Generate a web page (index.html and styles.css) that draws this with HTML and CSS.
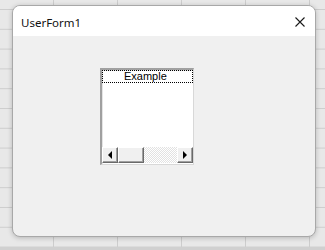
FILE: index.html
```html
<!DOCTYPE html>
<html>
<head>
<meta charset="utf-8">
<link rel="stylesheet" href="styles.css">
</head>
<body>
<div class="sheet">
  <div class="window">
    <div class="titlebar">
      <span class="title">UserForm1</span>
      <svg class="close" width="10" height="10" viewBox="0 0 10 10"><path d="M0.5 0.5 L9.5 9.5 M9.5 0.5 L0.5 9.5" stroke="#1a1a1a" stroke-width="1.1" fill="none"/></svg>
    </div>
    <div class="client">
      <div class="listbox">
        <div class="item">Example</div>
        <div class="list-space"></div>
        <div class="hscroll">
          <div class="sbtn"><span class="arrow-left"></span></div>
          <div class="thumb"></div>
          <div class="track"></div>
          <div class="sbtn"><span class="arrow-right"></span></div>
        </div>
      </div>
    </div>
  </div>
  <div class="bottom-strip"></div>
</div>
</body>
</html>
```
FILE: styles.css
```css
html, body {
  margin: 0;
  padding: 0;
}
body {
  width: 325px;
  height: 250px;
  overflow: hidden;
}
.sheet {
  width: 325px;
  height: 250px;
  display: flex;
  flex-direction: column;
  background-color: #e8e8e8;
  background-image:
    linear-gradient(to right, #cdcdcd 1px, transparent 1px),
    linear-gradient(to bottom, #cdcdcd 1px, transparent 1px);
  background-size: 64px 100%, 100% 19.8px;
  background-position: 53px 0, 0 9px;
}
.window {
  margin: 5px 0 0 12px;
  width: 302px;
  height: 230px;
  border: 1px solid #a8a8a8;
  border-radius: 8px;
  background: #f0f0f0;
  box-shadow: 0 1px 5px rgba(0,0,0,0.22);
  overflow: hidden;
  display: flex;
  flex-direction: column;
}
.titlebar {
  height: 30px;
  background: #ffffff;
  display: flex;
  align-items: center;
  justify-content: space-between;
  padding: 0 10px 0 8px;
  flex-shrink: 0;
}
.title {
  font-family: "Noto Sans", "Open Sans", sans-serif;
  font-size: 11.5px;
  color: #111;
  margin-top: 2px;
}
.close {
  display: block;
  margin-right: 0px;
  margin-top: 1px;
}
.client {
  flex: 1;
  padding: 32px 0 0 87px;
}
.listbox {
  width: 91px;
  height: 94px;
  border-top: 2px solid #a0a0a0;
  border-left: 2px solid #a0a0a0;
  border-right: 1px solid #d8d8d8;
  border-bottom: 1px solid #d8d8d8;
  box-shadow: inset 1px 1px 0 #e4e4e4;
  background: #ffffff;
  display: flex;
  flex-direction: column;
}
.item {
  height: 11px;
  border: 1px dotted #000;
  font-family: "Liberation Sans", Arial, sans-serif;
  font-size: 11px;
  line-height: 11px;
  color: #000;
  padding-left: 21px;
}
.list-space {
  flex: 1;
}
.hscroll {
  height: 16px;
  display: flex;
  margin-bottom: 1px;
}
.sbtn {
  width: 14px;
  height: 14px;
  background: #f0f0f0;
  border-top: 1px solid #ffffff;
  border-left: 1px solid #ffffff;
  border-right: 1px solid #696969;
  border-bottom: 1px solid #696969;
  box-shadow: inset -1px -1px 0 #a0a0a0;
  display: flex;
  align-items: center;
  justify-content: center;
}
.thumb {
  width: 24px;
  height: 14px;
  background: #f0f0f0;
  border-top: 1px solid #ffffff;
  border-left: 1px solid #ffffff;
  border-right: 1px solid #696969;
  border-bottom: 1px solid #696969;
  box-shadow: inset -1px -1px 0 #a0a0a0;
}
.track {
  flex: 1;
  background: repeating-conic-gradient(#ffffff 0 25%, #e2e2e2 0 50%) 0 0 / 2px 2px;
}
.arrow-left {
  width: 0;
  height: 0;
  border-top: 4px solid transparent;
  border-bottom: 4px solid transparent;
  border-right: 4px solid #000;
}
.arrow-right {
  width: 0;
  height: 0;
  border-top: 4px solid transparent;
  border-bottom: 4px solid transparent;
  border-left: 4px solid #000;
}
.bottom-strip {
  margin-top: auto;
  height: 3px;
  background: #d0d0d0;
}
```
